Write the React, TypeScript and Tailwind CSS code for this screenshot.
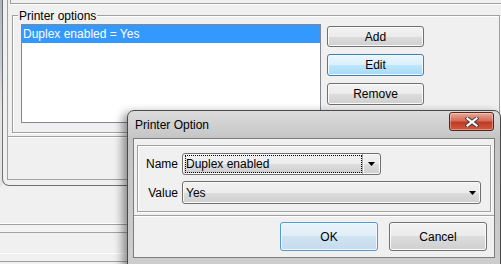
import React from "react";

const face =
  "rounded-[3px] border border-[#707070] bg-[linear-gradient(to_bottom,#f2f2f2_0%,#ebebeb_50%,#dddddd_50%,#cfcfcf_100%)] shadow-[inset_0_0_0_1px_#fbfbfb]";
const btn = `flex items-center justify-center ${face}`;
const btnHot =
  "flex items-center justify-center rounded-[3px] border border-[#3c7fb1] bg-[linear-gradient(to_bottom,#eaf6fd_0%,#d9f0fc_50%,#bee6fd_50%,#a7d9f5_100%)] shadow-[inset_0_0_0_1px_#f4fbff]";
const btnDefault =
  "flex items-center justify-center rounded-[3px] border border-[#4f9bd5] bg-[linear-gradient(to_bottom,#eaf3fb_0%,#dfecf7_50%,#cfe2f2_50%,#c5dcee_100%)] shadow-[inset_0_0_0_1px_#f2f8fd]";

function Arrow() {
  return (
    <svg width="7" height="4" viewBox="0 0 7 4">
      <path d="M0 0h7L3.5 4z" fill="#000" />
    </svg>
  );
}

function CloseGlyph() {
  return (
    <svg width="14" height="10" viewBox="0 0 14 10">
      <path d="M2.5 1.5L11.5 8.5M11.5 1.5L2.5 8.5" stroke="#3b3b3b" strokeWidth="4" strokeLinecap="square" />
      <path d="M2.5 1.5L11.5 8.5M11.5 1.5L2.5 8.5" stroke="#ffffff" strokeWidth="2.2" strokeLinecap="square" />
    </svg>
  );
}

export default function App() {
  return (
    <div className="relative flex h-[264px] w-[501px] flex-col overflow-hidden bg-[#f0f0f0] font-['Liberation_Sans',Arial,sans-serif] text-[12px] leading-none text-black">
      {/* window behind */}
      <div className="flex h-[186px] shrink-0">
        <div className="w-[2px] bg-[linear-gradient(to_bottom,#a9b5c1,#c3ccd4_35%,#e4e4e4_60%)]" />
        <div className="flex-1 rounded-bl-[7px] border-b border-l border-[#6f6f6f] bg-[#f0f0f0] pb-[5px] pl-[4px]">
          <div className="flex h-full flex-col border-b border-l border-[#a0a0a0]">
            <div className="ml-[2px] h-[4px] border-b border-l border-[#a0a0a0]" />
            <div className="ml-[2px] h-px bg-white" />

            <div className="relative ml-[4px] mt-[10px] h-[118px] w-[488px] border border-[#a0a0a0] shadow-[inset_1px_1px_0_#fff,1px_1px_0_#fff]">
              <span className="absolute left-[5px] top-[-7px] bg-[#f0f0f0] px-px leading-[14px]">
                Printer options
              </span>
              <div className="flex pl-[8px] pt-[8px]">
                <div className="h-[99px] w-[300px] border border-[#828790] bg-white">
                  <div className="flex h-[18px] items-center bg-[#3399ff] pl-px text-white">
                    Duplex enabled = Yes
                  </div>
                </div>
                <div className="ml-[6px] mt-[2px] flex w-[97px] flex-col gap-[7px]">
                  <div className={`${btn} h-[21px]`}>Add</div>
                  <div className={`${btnHot} h-[22px]`}>Edit</div>
                  <div className={`${btn} h-[22px]`}>Remove</div>
                </div>
              </div>
            </div>

            <div className="mt-[3px] flex-1 border-t border-[#a0a0a0] shadow-[inset_0_1px_0_#fff]" />
          </div>
        </div>
      </div>

      {/* toolbar lines further behind */}
      <div className="mt-[37px] h-px bg-white" />
      <div className="h-[9px] border-y border-[#a0a0a0] bg-[#f3f3f3]" />
      <div className="mt-[20px] h-px bg-white" />
      <div className="h-[8px] border-b border-[#a0a0a0]" />

      {/* Printer Option dialog */}
      <div className="absolute left-[127px] top-[110px] flex h-[160px] w-[374px] flex-col rounded-t-[7px] border border-[#4a4a4a] bg-[linear-gradient(to_bottom,#dcdcdc,#c4c4c4_28px,#cdcdcd)] px-[5px] shadow-[-4px_3px_10px_rgba(0,0,0,0.45)]">
        <div className="flex h-[27px] shrink-0 items-start justify-between">
          <span className="mt-[8px] pl-[2px]">Printer Option</span>
          <div className="mr-px mt-px flex h-[19px] w-[45px] items-center justify-center rounded-[3px] border border-[#5b2418] bg-[linear-gradient(to_bottom,#e9a99b_0%,#d46c57_45%,#c13a22_55%,#cf5a42_100%)] shadow-[inset_0_0_0_1px_rgba(255,255,255,0.35)]">
            <CloseGlyph />
          </div>
        </div>

        <div className="flex h-[120px] shrink-0 flex-col border border-[#7c7c7c] bg-[#f0f0f0]">
          <div className="ml-[3px] mt-[6px] h-[67px] w-[354px] border border-[#a0a0a0] pt-[7px] shadow-[inset_1px_1px_0_#fff,1px_1px_0_#fff]">
            <div className="flex items-center">
              <span className="w-[40px] text-right">Name</span>
              <div className={`${face} ml-[4px] flex h-[22px] w-[199px] items-center`}>
                <div className="my-px ml-[2px] flex h-[18px] w-[177px] items-center border border-dotted border-black">
                  Duplex enabled
                </div>
                <div className="h-full w-px bg-[#a8a8a8] shadow-[1px_0_0_#f8f8f8]" />
                <div className="flex flex-1 items-center justify-center">
                  <Arrow />
                </div>
              </div>
            </div>
            <div className="mt-[6px] flex items-center">
              <span className="w-[40px] text-right">Value</span>
              <div className={`${face} ml-[4px] flex h-[23px] w-[299px] items-center justify-between pl-[3px] pr-[4px]`}>
                <span>Yes</span>
                <Arrow />
              </div>
            </div>
          </div>

          <div className="mt-[3px] h-px bg-[#a0a0a0]" />
          <div className="h-px bg-white" />

          <div className="flex justify-end gap-[11px] pr-[7px] pt-[5px]">
            <div className={`${btnDefault} h-[29px] w-[98px]`}>OK</div>
            <div className={`${btn} h-[29px] w-[98px]`}>Cancel</div>
          </div>
        </div>
      </div>
    </div>
  );
}
